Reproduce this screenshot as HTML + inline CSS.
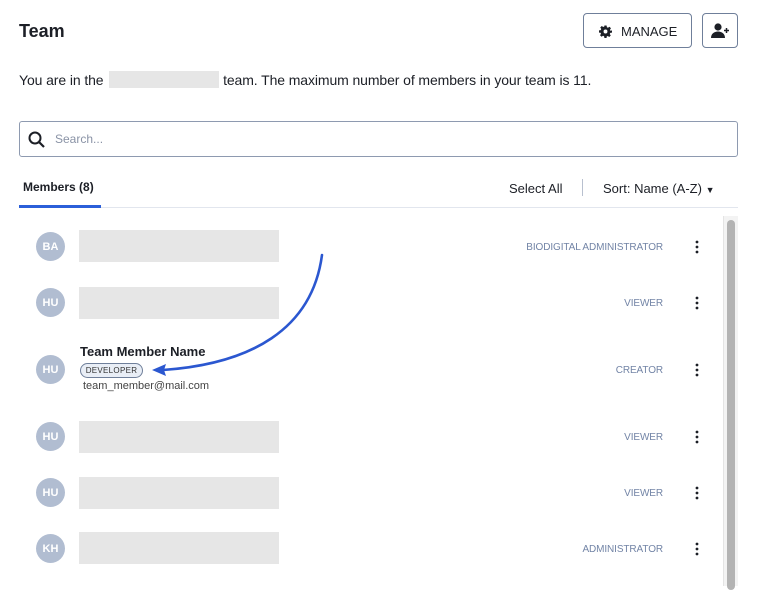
<!DOCTYPE html>
<html><head><meta charset="utf-8"><style>
*{margin:0;padding:0;box-sizing:border-box}
body{width:758px;height:586px;background:#fff;font-family:"Liberation Sans",sans-serif;color:#1c1f26;position:relative;overflow:hidden}
.a{position:absolute}
.btn{position:absolute;border:1px solid #6f7f9a;border-radius:4px;background:#fff}
.av{position:absolute;left:36px;width:29px;height:29px;border-radius:50%;background:#b1bdd1;color:#fff;font-size:11px;font-weight:bold;display:flex;align-items:center;justify-content:center}
.gb{position:absolute;left:79px;width:200px;height:32px;background:#e6e6e6}
.role{position:absolute;right:95px;font-size:10px;color:#7284a6;letter-spacing:-.1px}
</style></head><body>
<div class="a" style="left:19px;top:21px;font-size:18px;font-weight:bold">Team</div>
<div class="btn" style="left:583px;top:13px;width:109px;height:35px">
<svg class="a" style="left:15px;top:11px" width="13" height="13" viewBox="0 0 24 24"><path fill="#1c1f26" d="M10 1h4l.6 3.2 2 .9 2.7-1.8 2.8 2.8-1.8 2.7.9 2L24 10v4l-3.2.6-.9 2 1.8 2.7-2.8 2.8-2.7-1.8-2 .9L14 24h-4l-.6-3.2-2-.9-2.7 1.8-2.8-2.8 1.8-2.7-.9-2L0 14v-4l3.2-.6.9-2L2.3 4.7 5.1 1.9l2.7 1.8 2-.9z"/><circle cx="12" cy="12" r="3.6" fill="#fff"/></svg>
<span class="a" style="left:37px;top:10px;font-size:13px">MANAGE</span></div>
<div class="btn" style="left:702px;top:13px;width:36px;height:35px">
<svg class="a" style="left:8px;top:9px" width="19" height="16" viewBox="0 0 19 16"><circle cx="7" cy="4" r="3.6" fill="#1c1f26"/><path d="M0 15c0-4 3-6.5 7-6.5s7 2.5 7 6.5z" fill="#1c1f26"/><path d="M15.5 5v5M13 7.5h5" stroke="#1c1f26" stroke-width="1.5"/></svg></div>
<div class="a" style="left:19px;top:71px;font-size:14px;letter-spacing:-.1px">You are in the <span style="display:inline-block;width:110px;height:17px;background:#e6e6e6;vertical-align:-3px;margin-left:2px"></span> team. The maximum number of members in your team is 11.</div>
<div class="a" style="left:19px;top:121px;width:719px;height:36px;border:1px solid #8e9ab0;border-radius:3px">
<svg class="a" style="left:8px;top:9px" width="17" height="17" viewBox="0 0 17 17"><circle cx="7" cy="7" r="5.5" fill="none" stroke="#1c1f26" stroke-width="2"/><path d="M11 11l5 5" stroke="#1c1f26" stroke-width="2.2"/></svg>
<span class="a" style="left:35px;top:10px;font-size:12px;color:#8a93a6">Search...</span></div>
<div class="a" style="left:23px;top:180px;font-size:12px;font-weight:bold">Members (8)</div>
<div class="a" style="left:19px;top:205px;width:82px;height:3px;background:#2b5fd9"></div>
<div class="a" style="left:101px;top:207px;width:637px;height:1px;background:#e2e6ee"></div>
<div class="a" style="left:509px;top:181px;font-size:13px">Select All</div>
<div class="a" style="left:582px;top:179px;width:1px;height:17px;background:#b8c0cf"></div>
<div class="a" style="left:603px;top:181px;font-size:13px">Sort: Name (A-Z) <span style="font-size:9px">▼</span></div>
<div class="a" style="left:723px;top:216px;width:15px;height:370px;background:#f3f3f3;border-left:1px solid #e4e4e4"></div>
<div class="a" style="left:727px;top:220px;width:8px;height:370px;background:#b3b3b3;border-radius:4px"></div>

<div class="av" style="top:232px">BA</div><div class="gb" style="top:230px"></div><div class="role" style="top:242px">BIODIGITAL ADMINISTRATOR</div>
<div class="av" style="top:288px">HU</div><div class="gb" style="top:287px"></div><div class="role" style="top:298px">VIEWER</div>
<div class="av" style="top:355px">HU</div>
<div class="a" style="left:80px;top:344px;font-size:13px;font-weight:bold">Team Member Name</div>
<div class="a" style="left:80px;top:363px;width:63px;height:15px;border:1px solid #6f7f9a;border-radius:8px;background:#e9eef6;font-size:8px;color:#333;text-align:center;line-height:13px;letter-spacing:.3px">DEVELOPER</div>
<div class="a" style="left:83px;top:380px;font-size:11px;color:#444">team_member@mail.com</div>
<div class="role" style="top:365px">CREATOR</div>
<div class="av" style="top:422px">HU</div><div class="gb" style="top:421px"></div><div class="role" style="top:432px">VIEWER</div>
<div class="av" style="top:478px">HU</div><div class="gb" style="top:477px"></div><div class="role" style="top:488px">VIEWER</div>
<div class="av" style="top:534px">KH</div><div class="gb" style="top:532px"></div><div class="role" style="top:544px">ADMINISTRATOR</div>

<svg class="a" style="left:0;top:0" width="758" height="586">
<g fill="#1c1f26">
<circle cx="697" cy="242" r="1.4"/><circle cx="697" cy="247" r="1.4"/><circle cx="697" cy="252" r="1.4"/>
<circle cx="697" cy="298" r="1.4"/><circle cx="697" cy="303" r="1.4"/><circle cx="697" cy="308" r="1.4"/>
<circle cx="697" cy="365" r="1.4"/><circle cx="697" cy="370" r="1.4"/><circle cx="697" cy="375" r="1.4"/>
<circle cx="697" cy="432" r="1.4"/><circle cx="697" cy="437" r="1.4"/><circle cx="697" cy="442" r="1.4"/>
<circle cx="697" cy="488" r="1.4"/><circle cx="697" cy="493" r="1.4"/><circle cx="697" cy="498" r="1.4"/>
<circle cx="697" cy="544" r="1.4"/><circle cx="697" cy="549" r="1.4"/><circle cx="697" cy="554" r="1.4"/>
</g>
<path d="M322 255C312 330 250 364 163 370" fill="none" stroke="#2b57d0" stroke-width="2.6" stroke-linecap="round"/>
<path d="M152 370L166 364L164 370L166 376Z" fill="#2b57d0"/>
</svg>
</body></html>
